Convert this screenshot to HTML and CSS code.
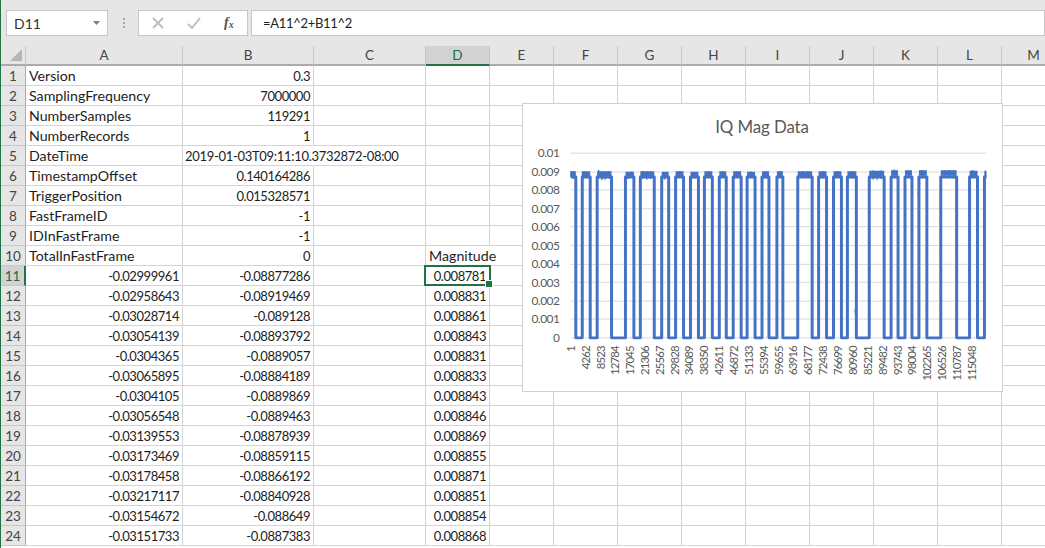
FILE: index.html
```html
<!DOCTYPE html>
<html lang="en">
<head>
<meta charset="utf-8">
<title>IQ Mag Data</title>
<link rel="stylesheet" href="styles.css">
</head>
<body>
<div class="app">
  <div class="formula-bar">
    <div class="name-box"><span>D11</span><svg class="caret" width="7" height="4" viewBox="0 0 7 4"><path d="M0 0H7L3.500 4Z"/></svg></div>
    <svg class="grip" width="3" height="10" viewBox="0 0 3 10"><path d="M0 0h2v2H0zM0 4h2v2H0zM0 8h2v2H0z"/></svg>
    <div class="fx-box">
      <svg width="12" height="12" viewBox="0 0 12 12"><path class="cancel" d="M1 1L11 11M11 1L1 11"/></svg>
      <svg width="14" height="12" viewBox="0 0 14 12"><path class="accept" d="M1 7L5 11L13 1"/></svg>
      <span class="fx">f<sub>x</sub></span>
    </div>
    <div class="formula-input">=A11^2+B11^2</div>
  </div>
  <div class="sheet">
    <table class="grid">
      <colgroup><col class="c-r"><col class="c-a"><col class="c-b"><col class="c-c"><col class="c-n"><col class="c-n"><col class="c-n"><col class="c-n"><col class="c-n"><col class="c-n"><col class="c-n"><col class="c-n"><col class="c-n"></colgroup>
      <thead>
        <tr><th class="corner"><span class="tri"></span></th><th>A</th><th>B</th><th>C</th><th class="sel-col">D</th><th>E</th><th>F</th><th>G</th><th>H</th><th>I</th><th>J</th><th>K</th><th>L</th><th>M</th></tr>
      </thead>
      <tbody>
        <tr><th>1</th><td>Version</td><td class="num">0.3</td><td></td><td></td><td></td><td></td><td></td><td></td><td></td><td></td><td></td><td></td><td></td></tr>
        <tr><th>2</th><td>SamplingFrequency</td><td class="num">7000000</td><td></td><td></td><td></td><td></td><td></td><td></td><td></td><td></td><td></td><td></td><td></td></tr>
        <tr><th>3</th><td>NumberSamples</td><td class="num">119291</td><td></td><td></td><td></td><td></td><td></td><td></td><td></td><td></td><td></td><td></td><td></td></tr>
        <tr><th>4</th><td>NumberRecords</td><td class="num">1</td><td></td><td></td><td></td><td></td><td></td><td></td><td></td><td></td><td></td><td></td><td></td></tr>
        <tr><th>5</th><td>DateTime</td><td class="spill stamp">2019-01-03T09:11:10.3732872-08:00</td><td></td><td></td><td></td><td></td><td></td><td></td><td></td><td></td><td></td><td></td><td></td></tr>
        <tr><th>6</th><td>TimestampOffset</td><td class="num">0.140164286</td><td></td><td></td><td></td><td></td><td></td><td></td><td></td><td></td><td></td><td></td><td></td></tr>
        <tr><th>7</th><td>TriggerPosition</td><td class="num">0.015328571</td><td></td><td></td><td></td><td></td><td></td><td></td><td></td><td></td><td></td><td></td><td></td></tr>
        <tr><th>8</th><td>FastFrameID</td><td class="num">-1</td><td></td><td></td><td></td><td></td><td></td><td></td><td></td><td></td><td></td><td></td><td></td></tr>
        <tr><th>9</th><td>IDInFastFrame</td><td class="num">-1</td><td></td><td></td><td></td><td></td><td></td><td></td><td></td><td></td><td></td><td></td><td></td></tr>
        <tr><th>10</th><td>TotalInFastFrame</td><td class="num">0</td><td></td><td class="spill">Magnitude</td><td></td><td></td><td></td><td></td><td></td><td></td><td></td><td></td><td></td></tr>
        <tr><th class="sel-row">11</th><td class="num">-0.02999961</td><td class="num">-0.08877286</td><td></td><td class="num active">0.008781</td><td></td><td></td><td></td><td></td><td></td><td></td><td></td><td></td><td></td></tr>
        <tr><th>12</th><td class="num">-0.02958643</td><td class="num">-0.08919469</td><td></td><td class="num">0.008831</td><td></td><td></td><td></td><td></td><td></td><td></td><td></td><td></td><td></td></tr>
        <tr><th>13</th><td class="num">-0.03028714</td><td class="num">-0.089128</td><td></td><td class="num">0.008861</td><td></td><td></td><td></td><td></td><td></td><td></td><td></td><td></td><td></td></tr>
        <tr><th>14</th><td class="num">-0.03054139</td><td class="num">-0.08893792</td><td></td><td class="num">0.008843</td><td></td><td></td><td></td><td></td><td></td><td></td><td></td><td></td><td></td></tr>
        <tr><th>15</th><td class="num">-0.0304365</td><td class="num">-0.0889057</td><td></td><td class="num">0.008831</td><td></td><td></td><td></td><td></td><td></td><td></td><td></td><td></td><td></td></tr>
        <tr><th>16</th><td class="num">-0.03065895</td><td class="num">-0.08884189</td><td></td><td class="num">0.008833</td><td></td><td></td><td></td><td></td><td></td><td></td><td></td><td></td><td></td></tr>
        <tr><th>17</th><td class="num">-0.0304105</td><td class="num">-0.0889869</td><td></td><td class="num">0.008843</td><td></td><td></td><td></td><td></td><td></td><td></td><td></td><td></td><td></td></tr>
        <tr><th>18</th><td class="num">-0.03056548</td><td class="num">-0.0889463</td><td></td><td class="num">0.008846</td><td></td><td></td><td></td><td></td><td></td><td></td><td></td><td></td><td></td></tr>
        <tr><th>19</th><td class="num">-0.03139553</td><td class="num">-0.08878939</td><td></td><td class="num">0.008869</td><td></td><td></td><td></td><td></td><td></td><td></td><td></td><td></td><td></td></tr>
        <tr><th>20</th><td class="num">-0.03173469</td><td class="num">-0.08859115</td><td></td><td class="num">0.008855</td><td></td><td></td><td></td><td></td><td></td><td></td><td></td><td></td><td></td></tr>
        <tr><th>21</th><td class="num">-0.03178458</td><td class="num">-0.08866192</td><td></td><td class="num">0.008871</td><td></td><td></td><td></td><td></td><td></td><td></td><td></td><td></td><td></td></tr>
        <tr><th>22</th><td class="num">-0.03217117</td><td class="num">-0.08840928</td><td></td><td class="num">0.008851</td><td></td><td></td><td></td><td></td><td></td><td></td><td></td><td></td><td></td></tr>
        <tr><th>23</th><td class="num">-0.03154672</td><td class="num">-0.088649</td><td></td><td class="num">0.008854</td><td></td><td></td><td></td><td></td><td></td><td></td><td></td><td></td><td></td></tr>
        <tr><th>24</th><td class="num">-0.03151733</td><td class="num">-0.0887383</td><td></td><td class="num">0.008868</td><td></td><td></td><td></td><td></td><td></td><td></td><td></td><td></td><td></td></tr>
      </tbody>
    </table>
    <svg class="chart" width="481" height="289" viewBox="522 103 481 289">
      <text class="title" x="762" y="132.500" text-anchor="middle">IQ Mag Data</text>
      <path class="gridline" d="M569.500 152.500H987.500M569.500 171.500H987.500M569.500 189.500H987.500M569.500 208.500H987.500M569.500 226.500H987.500M569.500 245.500H987.500M569.500 264.500H987.500M569.500 282.500H987.500M569.500 301.500H987.500M569.500 319.500H987.500M569.500 338.500H987.500"/>
      <g class="ylab" text-anchor="end">
        <text x="558" y="156.500">0.01</text><text x="558" y="175.500">0.009</text><text x="558" y="194">0.008</text><text x="558" y="212.500">0.007</text><text x="558" y="231">0.006</text><text x="558" y="250">0.005</text><text x="558" y="268.500">0.004</text><text x="558" y="287">0.003</text><text x="558" y="305.500">0.002</text><text x="558" y="324">0.001</text><text x="558" y="343">0</text>
      </g>
      <path class="band" d="M569 173.500H574.500M580.500 173.500H589M596 173.500H610.500M624.500 174H633M639.500 173.500H653.500M661 174H668M675 173.500H683M690 174H698M704 173.500H712M719 173.500H726M733 173.500H741M747 174H755M762 173.500H769M777 173.500H783M798 173.500H812.500M819 173.500H827M834 173.500H842M848 173.500H857M870 173H885M892 172.500H899M906 172.500H913M920 172.500H928M942 172.500H958M971 173H979M986 173.500H988"/>
      <path class="fuzz" d="M570 170.500V177M572.500 171V178M583 171V176M586.500 171.500V177M597.500 169.500V177M601 171V179.500M604 171V179M608 170.500V178M627 171.500V178.500M631 171V177M642 170.500V178M646 171V179M650 171V178.500M664 171.500V179M679 170.500V177M694 171.500V178M708 171V177M723 171V177M737 171V177.500M751 171V177.500M766 171V178M780 170.500V177M803 170.500V177M808 171V177M823 170.500V178M838 170.500V177.500M853 170.500V178M874 170V179M878 170.500V179M882 170V178.500M895 169V177M910 170V177M923 169.500V178M946 170V177M951 169.500V177.500M955 170V178M974 169.500V177M987 170V178"/>
      <path class="wave" d="M569.500 176.500H574.500V338.500H581V176.500H589V338.500H596V176.500H610.500V338.500H624.500V176.500H633V338.500H639.500V176.500H653.500V338.500H661V176.500H668V338.500H675V176.500H683V338.500H690V176.500H698V338.500H704V176.500H712V338.500H719V176.500H726V338.500H733V176.500H741V338.500H747V176.500H755V338.500H762V176.500H769V338.500H777V176.500H783V338.500H798V176.500H812.500V338.500H819V176.500H827V338.500H834V176.500H842V338.500H848V176.500H857V338.500H870V176.500H885V338.500H892V176.500H899V338.500H906V176.500H913V338.500H920V176.500H928V338.500H942V176.500H958V338.500H971V176.500H979V338.500H986V176.500H988"/>
      <path class="blip" d="M659.500 338L661 331M725.500 215L727 230M855.500 310L857.500 325M919 195L921 183"/>
      <g class="xlab" text-anchor="end">
        <text transform="translate(573.500 347) rotate(-90)">1</text>
        <text transform="translate(588.500 347) rotate(-90)">4262</text>
        <text transform="translate(603.500 347) rotate(-90)">8523</text>
        <text transform="translate(618 347) rotate(-90)">12784</text>
        <text transform="translate(633 347) rotate(-90)">17045</text>
        <text transform="translate(648 347) rotate(-90)">21306</text>
        <text transform="translate(663 347) rotate(-90)">25567</text>
        <text transform="translate(678 347) rotate(-90)">29828</text>
        <text transform="translate(693 347) rotate(-90)">34089</text>
        <text transform="translate(708 347) rotate(-90)">38350</text>
        <text transform="translate(723 347) rotate(-90)">42611</text>
        <text transform="translate(738 347) rotate(-90)">46872</text>
        <text transform="translate(753 347) rotate(-90)">51133</text>
        <text transform="translate(768 347) rotate(-90)">55394</text>
        <text transform="translate(783 347) rotate(-90)">59655</text>
        <text transform="translate(797.500 347) rotate(-90)">63916</text>
        <text transform="translate(812.500 347) rotate(-90)">68177</text>
        <text transform="translate(827.500 347) rotate(-90)">72438</text>
        <text transform="translate(842.500 347) rotate(-90)">76699</text>
        <text transform="translate(857.500 347) rotate(-90)">80960</text>
        <text transform="translate(872.500 347) rotate(-90)">85221</text>
        <text transform="translate(887.500 347) rotate(-90)">89482</text>
        <text transform="translate(902.500 347) rotate(-90)">93743</text>
        <text transform="translate(917.500 347) rotate(-90)">98004</text>
        <text transform="translate(932 347) rotate(-90)">102265</text>
        <text transform="translate(947 347) rotate(-90)">106526</text>
        <text transform="translate(962 347) rotate(-90)">110787</text>
        <text transform="translate(977 347) rotate(-90)">115048</text>
      </g>
    </svg>
  </div>
</div>
</body>
</html>
```
FILE: styles.css
```css
* { box-sizing: border-box; }
html, body { margin: 0; height: 100%; overflow: hidden; background: #fff; }
body { font-family: Lato, "Open Sans", sans-serif; color: #1d1d1d; }
.app { width: 1045px; height: 548px; overflow: hidden; display: flex; flex-direction: column; border-left: 1px solid #217346; }

.formula-bar { height: 46px; flex: none; background: #e6e6e6; display: flex; align-items: flex-start; padding: 10px 0 0 5px; }
.name-box { width: 102px; height: 26px; background: #fff; border: 1px solid #c6c6c6; display: flex; align-items: center; justify-content: space-between; padding: 0 7px 0 7px; font-size: 14px; color: #333; }
.caret path { fill: #808080; }
.grip { margin: 8px 0 0 15px; }
.grip path { fill: #a8a8a8; }
.fx-box { width: 110px; height: 26px; margin-left: 12px; background: #fff; border: 1px solid #c6c6c6; display: flex; align-items: center; gap: 23px; padding: 0 0 0 13px; }
.cancel, .accept { fill: none; stroke: #bdbdbd; stroke-width: 1.900; }
.fx { font-family: "Liberation Serif", serif; font-style: italic; font-weight: 700; font-size: 14px; color: #555; line-height: 1; }
.fx sub { font-size: 10px; vertical-align: -1px; line-height: 0; }
.formula-input { width: 794px; height: 26px; margin-left: 3px; background: #fff; border: 1px solid #c6c6c6; padding: 0 11px; font-size: 13px; letter-spacing: -0.300px; line-height: 24px; color: #222; }

.sheet { position: relative; flex: 1; overflow: hidden; }
.grid { table-layout: fixed; width: 1065px; border-collapse: separate; border-spacing: 0; font-size: 14.200px; }
.c-r { width: 25px; }
.c-a { width: 157px; }
.c-b { width: 131px; }
.c-c { width: 112px; }
.c-n { width: 64px; }
.grid th { background: #e6e6e6; font-weight: 400; font-size: 13.500px; color: #444; text-align: center; padding: 0; border-right: 1px solid #b9b9b9; border-bottom: 1px solid #c6c6c6; }
.grid thead th { height: 20px; border-bottom: 2px solid #ababab; border-right-color: #c6c6c6; }
.grid tbody th { border-right: 1px solid #ababab; padding-top: 1px; }
.grid td { height: 20px; padding: 1px 3px 0; border-right: 1px solid #d4d4d4; border-bottom: 1px solid #d4d4d4; white-space: nowrap; line-height: 18px; }
.grid tr { height: 20px; }
.grid .num { text-align: right; font-size: 13px; letter-spacing: -0.450px; }
.grid .stamp { font-size: 13px; letter-spacing: -0.300px; padding-left: 2px; }
.grid .spill { border-right-color: transparent; }
.grid .sel-col { background: #d2d2d2; color: #1d6b41; border-bottom-color: #217346; }
.grid .sel-row { background: #d2d2d2; color: #1d6b41; border-right: 2px solid #217346; }
.corner { position: relative; }
.tri { position: absolute; right: 3px; bottom: 3px; width: 0; height: 0; border-style: solid; border-width: 0 0 12px 12px; border-color: transparent transparent #b5b5b5 transparent; }

.active { position: relative; }
.active::before { content: ""; position: absolute; left: -2px; top: -1px; right: -2px; bottom: -1px; border: 2px solid #217346; }
.active::after { content: ""; position: absolute; right: -4px; bottom: -3px; width: 6px; height: 6px; background: #217346; border: 1px solid #fff; }

.chart { position: absolute; left: 521px; top: 57px; background: #fff; border: 1px solid #d0d0d0; display: block; }
.title { font-size: 17px; letter-spacing: -0.100px; fill: #595959; }
.gridline { fill: none; stroke: #d9d9d9; stroke-width: 1; }
.ylab { font-size: 12px; letter-spacing: -0.500px; fill: #595959; }
.xlab { font-size: 11.500px; letter-spacing: -0.900px; fill: #595959; }
.band { fill: none; stroke: #4472c4; stroke-width: 5.500; }
.fuzz { fill: none; stroke: #4472c4; stroke-width: 1.500; }
.wave { fill: none; stroke: #4472c4; stroke-width: 3; stroke-linejoin: round; }
.blip { fill: none; stroke: #4472c4; stroke-width: 1; }
```
